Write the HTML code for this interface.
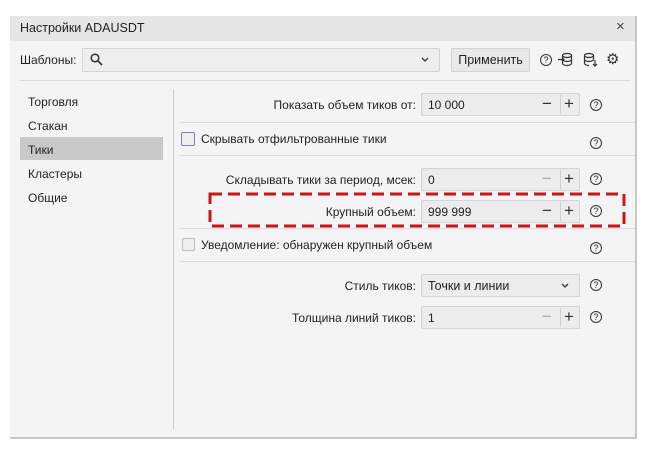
<!DOCTYPE html>
<html><head><meta charset="utf-8"><style>
*{box-sizing:border-box;margin:0;padding:0}
body{width:650px;height:454px;background:#fff;font-family:"Liberation Sans",sans-serif;font-size:12px;color:#222;position:relative;overflow:hidden}
.a{position:absolute}
.win{left:10px;top:16px;width:627px;height:423px;background:#f4f4f4;border-right:2px solid #c8c8c8;border-bottom:2px solid #c8c8c8}
.title{left:10px;top:16px;width:625px;height:25px;background:#e6e6e6}
.inp{background:#ececec;border:1px solid #d4d4d4;border-radius:2px;height:23px}
.lbl{text-align:right;white-space:nowrap}
.hl{height:1px;background:#dcdcdc}
.help{width:12px;height:12px;border:1.2px solid #333;border-radius:50%;font-size:9px;line-height:10px;text-align:center}
.mp{font-size:17px;line-height:21px;color:#333}
.cb{width:13px;height:13px;border:1px solid #bbb;background:#eee;border-radius:2px}
</style></head><body>
<div class="a win"></div>
<div class="a title"></div>
<div class="a" style="left:20px;top:21px;font-size:12.5px">Настройки ADAUSDT</div>
<div class="a" style="left:616px;top:18px;font-size:15px;color:#444">×</div>
<div class="a" style="left:20px;top:53px">Шаблоны:</div>
<div class="a inp" style="left:82px;top:48px;width:358px;height:24px;background:#eee"></div>
<svg class="a" style="left:90px;top:53px" width="13" height="13"><circle cx="5" cy="5" r="3.8" fill="none" stroke="#333" stroke-width="1.5"/><path d="M8 8l4 4" stroke="#333" stroke-width="1.6"/></svg>
<svg class="a" style="left:421px;top:57px" width="8" height="6"><path d="M1 1l3 3 3-3" fill="none" stroke="#333" stroke-width="1.3"/></svg>
<div class="a inp" style="left:451px;top:48px;width:79px;height:24px;background:#e9e9e9;text-align:center;line-height:22px;font-size:12.5px">Применить</div>
<div class="a help" style="left:540px;top:54px">?</div>
<svg class="a" style="left:557px;top:52px" width="16" height="15"><ellipse cx="10" cy="3.5" rx="4.5" ry="2" fill="none" stroke="#333" stroke-width="1.2"/><path d="M5.5 3.5v8c0 1 2 2 4.5 2s4.5-1 4.5-2v-8M5.5 7.5c0 1 2 2 4.5 2s4.5-1 4.5-2M1 7.5h6M5 5.5l2 2-2 2" fill="none" stroke="#333" stroke-width="1.2"/></svg>
<svg class="a" style="left:583px;top:52px" width="15" height="15"><ellipse cx="6" cy="3.5" rx="4.5" ry="2" fill="none" stroke="#333" stroke-width="1.2"/><path d="M1.5 3.5v8c0 1 2 2 4.5 2M1.5 7.5c0 1 2 2 4.5 2s4.5-1 4.5-2v-4M12 8v6M10 12l2 2 2-2" fill="none" stroke="#333" stroke-width="1.2"/></svg>
<div class="a" style="left:606px;top:50px;font-size:15px;color:#333">⚙</div>
<div class="a hl" style="left:20px;top:80px;width:610px"></div>
<div class="a" style="left:173px;top:89px;width:1px;height:340px;background:#ccc"></div>
<div class="a" style="left:20px;top:137px;width:143px;height:23px;background:#c9c9c9"></div>
<div class="a" style="left:28px;top:95px">Торговля</div>
<div class="a" style="left:28px;top:119px">Стакан</div>
<div class="a" style="left:28px;top:143px">Тики</div>
<div class="a" style="left:28px;top:167px">Кластеры</div>
<div class="a" style="left:28px;top:191px">Общие</div>

<div class="a lbl" style="right:234px;top:98px">Показать объем тиков от:</div>
<div class="a inp" style="left:421px;top:93px;width:159px"></div>
<div class="a" style="left:428px;top:98px">10 000</div>
<div class="a mp" style="left:542px;top:93px">−</div><div class="a" style="left:560px;top:95px;width:1px;height:19px;background:#d0d0d0"></div><div class="a mp" style="left:564px;top:93px">+</div>
<div class="a help" style="left:590px;top:99px">?</div>
<div class="a hl" style="left:180px;top:122px;width:455px"></div>
<div class="a cb" style="left:181px;top:132px;border-color:#8a7ab8;width:14px;height:14px"></div>
<div class="a" style="left:201px;top:132px">Скрывать отфильтрованные тики</div>
<div class="a help" style="left:590px;top:137px">?</div>
<div class="a hl" style="left:180px;top:155px;width:455px"></div>

<div class="a lbl" style="right:234px;top:173px">Складывать тики за период, мсек:</div>
<div class="a inp" style="left:421px;top:168px;width:159px"></div>
<div class="a" style="left:428px;top:173px">0</div>
<div class="a mp" style="left:542px;top:168px;color:#aaa">−</div><div class="a" style="left:560px;top:170px;width:1px;height:19px;background:#d0d0d0"></div><div class="a mp" style="left:564px;top:168px">+</div>
<div class="a help" style="left:590px;top:173px">?</div>

<svg class="a" style="left:208px;top:192px" width="418" height="36"><rect x="2" y="2" width="414" height="32" fill="none" stroke="#c8161a" stroke-width="3" stroke-dasharray="12 6"/></svg>
<div class="a lbl" style="right:234px;top:205px">Крупный объем:</div>
<div class="a inp" style="left:421px;top:200px;width:159px"></div>
<div class="a" style="left:428px;top:205px">999 999</div>
<div class="a mp" style="left:542px;top:200px">−</div><div class="a" style="left:560px;top:202px;width:1px;height:19px;background:#d0d0d0"></div><div class="a mp" style="left:564px;top:200px">+</div>
<div class="a help" style="left:590px;top:205px">?</div>
<div class="a hl" style="left:180px;top:228px;width:455px"></div>
<div class="a cb" style="left:182px;top:238px"></div>
<div class="a" style="left:201px;top:238px">Уведомление: обнаружен крупный объем</div>
<div class="a help" style="left:590px;top:242px">?</div>
<div class="a hl" style="left:180px;top:261px;width:455px"></div>

<div class="a lbl" style="right:234px;top:279px">Стиль тиков:</div>
<div class="a inp" style="left:421px;top:274px;width:159px"></div>
<div class="a" style="left:428px;top:279px;font-size:12.5px">Точки и линии</div>
<svg class="a" style="left:561px;top:283px" width="8" height="6"><path d="M1 1l3 3 3-3" fill="none" stroke="#333" stroke-width="1.3"/></svg>
<div class="a help" style="left:590px;top:279px">?</div>

<div class="a lbl" style="right:234px;top:311px">Толщина линий тиков:</div>
<div class="a inp" style="left:421px;top:306px;width:159px"></div>
<div class="a" style="left:428px;top:311px">1</div>
<div class="a mp" style="left:542px;top:306px;color:#aaa">−</div><div class="a" style="left:560px;top:308px;width:1px;height:19px;background:#d0d0d0"></div><div class="a mp" style="left:564px;top:306px">+</div>
<div class="a help" style="left:590px;top:311px">?</div>
</body></html>
